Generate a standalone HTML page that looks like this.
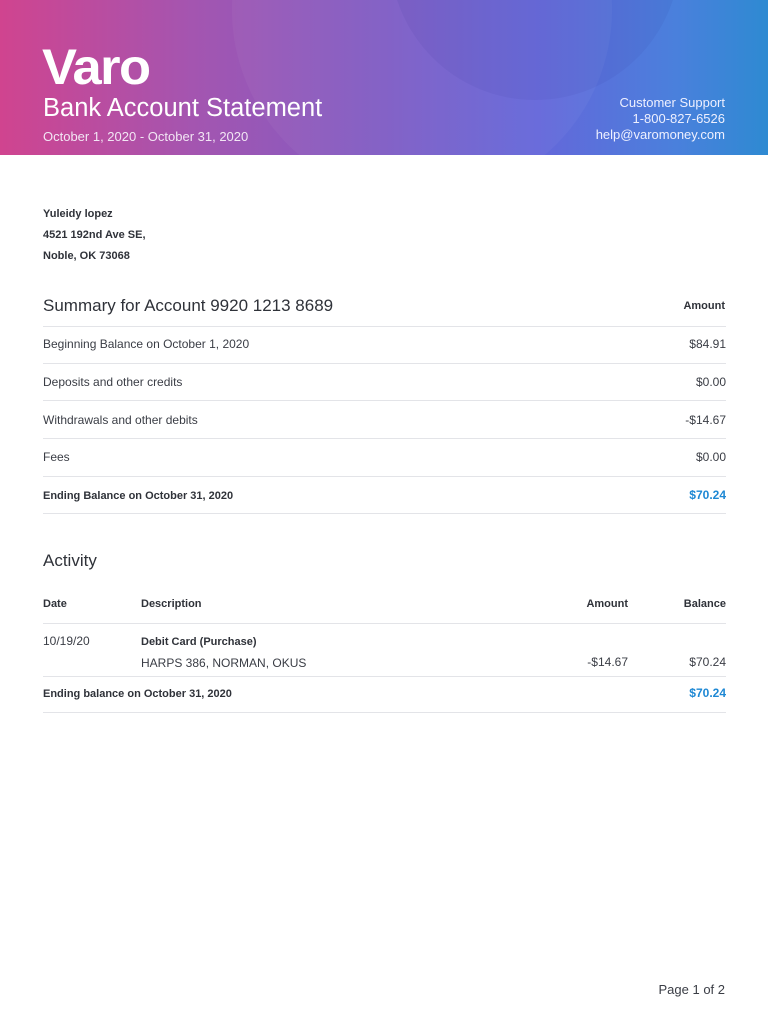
<!DOCTYPE html>
<html><head><meta charset="utf-8"><style>
*{margin:0;padding:0;box-sizing:border-box}
body{width:768px;height:1024px;background:#fff;font-family:"Liberation Sans",sans-serif;color:#3a3d45;position:relative;overflow:hidden}
.hdr{position:absolute;left:0;top:0;width:768px;height:155px;background:linear-gradient(90deg,#d0448f 0%,#a455b0 25%,#7f5cc4 50%,#6467da 70%,#4a80dc 88%,#2e8ad2 100%);overflow:hidden}
.c1{position:absolute;left:232px;top:-180px;width:380px;height:380px;border-radius:50%;background:rgba(255,255,255,0.04)}
.c2{position:absolute;left:390px;top:-190px;width:290px;height:290px;border-radius:50%;background:rgba(40,40,140,0.07)}
.logo{position:absolute;left:42px;top:40px;color:#fff;font-size:50px;font-weight:bold;letter-spacing:-1.5px;line-height:54px;transform:scaleX(1.05);transform-origin:left}
.t1{position:absolute;left:43px;top:93px;color:#fff;font-size:25.5px;line-height:30px}
.t2{position:absolute;left:43px;top:129px;color:#f2e6f4;font-size:13px}
.sup{position:absolute;right:43px;top:95px;color:#eef0ff;font-size:13px;line-height:16px;text-align:right}
.abs{position:absolute}
.b{font-weight:bold;font-size:11px;color:#2f3239}
.row{position:absolute;left:43px;width:683px;border-bottom:1px solid #e3e4e8;font-size:12px;line-height:14px}
.r{position:absolute;right:0;top:0}
.blue{color:#1e88d4;font-weight:bold}
</style></head><body>
<div class="hdr"><div class="c1"></div><div class="c2"></div>
<div class="logo">Varo</div>
<div class="t1">Bank Account Statement</div>
<div class="t2">October 1, 2020 - October 31, 2020</div>
<div class="sup">Customer Support<br>1-800-827-6526<br>help@varomoney.com</div>
</div>
<div class="abs b" style="left:43px;top:204px;line-height:21px">Yuleidy lopez<br>4521 192nd Ave SE,<br>Noble, OK 73068</div>
<div class="abs" style="left:43px;top:296px;font-size:17px;color:#2f3239">Summary for Account 9920 1213 8689</div>
<div class="abs b" style="right:43px;top:300px">Amount</div>
<div class="row" style="top:326px;height:1px"></div>
<div class="row" style="top:337px;height:27px">Beginning Balance on October 1, 2020<span class="r">$84.91</span></div>
<div class="row" style="top:375px;height:26px">Deposits and other credits<span class="r">$0.00</span></div>
<div class="row" style="top:413px;height:26px">Withdrawals and other debits<span class="r">-$14.67</span></div>
<div class="row" style="top:450px;height:27px">Fees<span class="r">$0.00</span></div>
<div class="row" style="top:488px;height:26px"><span class="b">Ending Balance on October 31, 2020</span><span class="r blue">$70.24</span></div>
<div class="abs" style="left:43px;top:551px;font-size:17px;color:#2f3239">Activity</div>
<div class="row" style="top:597px;height:27px"><span class="b abs" style="left:0;top:0">Date</span><span class="b abs" style="left:98px;top:0">Description</span><span class="b abs" style="right:98px;top:0">Amount</span><span class="b r">Balance</span></div>
<div class="row" style="top:631px;height:46px;line-height:21px">10/19/20<div class="abs" style="left:98px;top:0"><span class="b">Debit Card (Purchase)</span><br>HARPS 386, NORMAN, OKUS</div><span class="abs" style="right:98px;top:21px">-$14.67</span><span class="r" style="top:21px">$70.24</span></div>
<div class="row" style="top:686px;height:27px"><span class="b">Ending balance on October 31, 2020</span><span class="r blue">$70.24</span></div>
<div class="abs" style="right:43px;top:982px;font-size:13px">Page 1 of 2</div>
</body></html>
